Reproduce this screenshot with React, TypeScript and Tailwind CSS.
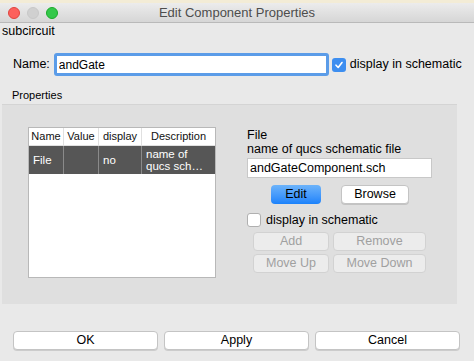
import React, { useState } from 'react';

const font = { fontFamily: '"Liberation Sans", Arial, sans-serif' };

function MacButton({ label, className = '' }: { label: string; className?: string }) {
  return (
    <button
      className={`flex items-center justify-center rounded-[4px] border border-[#c4c4c4] bg-white text-[12.5px] text-black shadow-[0_1px_0_rgba(0,0,0,0.12)] ${className}`}
    >
      {label}
    </button>
  );
}

function DisabledButton({ label }: { label: string }) {
  return (
    <button className="flex h-[19px] items-center justify-center rounded-[4px] border border-[#d2d2d2] bg-[#ececec] text-[12.5px] text-[#a0a0a0]">
      {label}
    </button>
  );
}

export default function App() {
  const [name, setName] = useState('andGate');
  const [file, setFile] = useState('andGateComponent.sch');
  const [showName, setShowName] = useState(true);
  const [showFile, setShowFile] = useState(false);

  return (
    <div className="flex h-[361px] w-[474px] flex-col overflow-hidden bg-[#e9e9e9] text-black" style={font}>
      {/* desktop strip above the window */}
      <div className="h-[3px] bg-[#f3ecd6]" />

      {/* Title bar */}
      <div className="relative flex h-[20px] items-center justify-center border-b border-[#b9b9b9] bg-gradient-to-b from-[#ececec] to-[#d6d6d6]">
        <div className="absolute left-[8px] top-[4px] flex gap-[7px]">
          <span className="h-[12px] w-[12px] rounded-full border border-[#e0443e] bg-[#fc605c]" />
          <span className="h-[12px] w-[12px] rounded-full border border-[#c8c8c8] bg-[#d0d0d0]" />
          <span className="h-[12px] w-[12px] rounded-full border border-[#1aab29] bg-[#34c84a]" />
        </div>
        <span className="text-[13px] text-[#4d4d4d]">Edit Component Properties</span>
      </div>

      {/* Body */}
      <div className="flex flex-1 flex-col text-[12px]">
        <div className="pl-[2px] pt-[1px] text-[12.5px] leading-[15px]">subcircuit</div>

        {/* Name row */}
        <div className="mt-[14px] flex items-center pl-[13px]">
          <span className="text-[12.5px]">Name:</span>
          <input
            value={name}
            onChange={(e) => setName(e.target.value)}
            className="ml-[4px] h-[23px] w-[275px] rounded-[3px] border-[3px] border-[#5b9ce8] bg-white px-[2px] text-[12px] outline-none"
          />
          <label className="ml-[3px] flex items-center gap-[4px] text-[12.5px]">
            <span
              onClick={() => setShowName(!showName)}
              className={`flex h-[14px] w-[14px] items-center justify-center rounded-[3px] ${showName ? 'bg-[#3d8ef0]' : 'border border-[#b0b0b0] bg-white'}`}
            >
              {showName && (
                <svg width="10" height="10" viewBox="0 0 10 10">
                  <path d="M2 5.2 L4.2 7.5 L8 2.5" fill="none" stroke="white" strokeWidth="1.6" strokeLinecap="round" strokeLinejoin="round" />
                </svg>
              )}
            </span>
            display in schematic
          </label>
        </div>

        {/* Properties group */}
        <div className="mt-[13px] pl-[12px] text-[11px] leading-[13px]">Properties</div>
        <div className="ml-[2px] mt-[2px] flex h-[200px] w-[455px] border-t border-[#d4d4d4] bg-[#dfdfdf] pt-[22px]">
          {/* Table */}
          <div className="ml-[26px] flex h-[151px] w-[188px] flex-col border border-[#b8b8b8] bg-white text-[11px]">
            <div className="flex h-[18px] items-center border-b border-[#e0e0e0] text-[#111]">
              <div className="w-[35px] border-r border-[#e0e0e0] text-center">Name</div>
              <div className="w-[35px] border-r border-[#e0e0e0] text-center">Value</div>
              <div className="w-[43px] border-r border-[#e0e0e0] text-center">display</div>
              <div className="flex-1 text-center">Description</div>
            </div>
            <div className="flex h-[28px] bg-[#565656] text-[11.5px] leading-[12px] text-white">
              <div className="flex w-[35px] items-center border-r border-[#8a8a8a] pl-[4px]">File</div>
              <div className="w-[35px] border-r border-[#8a8a8a]" />
              <div className="flex w-[43px] items-center border-r border-[#8a8a8a] pl-[4px]">no</div>
              <div className="flex flex-1 flex-col justify-center pl-[4px]">
                <span>name of</span>
                <span>qucs sch…</span>
              </div>
            </div>
          </div>

          {/* Right side */}
          <div className="ml-[31px] flex w-[186px] flex-col pt-[1px] text-[12.5px]">
            <div className="leading-[14px]">File</div>
            <div className="leading-[15px]">name of qucs schematic file</div>
            <input
              value={file}
              onChange={(e) => setFile(e.target.value)}
              className="mt-[1px] h-[20px] w-[185px] border border-[#c8c8c8] bg-white px-[2px] text-[12.5px] outline-none"
            />
            <div className="mt-[7px] flex items-start">
              <button className="ml-[24px] flex h-[19px] w-[50px] items-center justify-center rounded-[4px] bg-gradient-to-b from-[#6cb3fa] to-[#1a82fb] text-[12.5px] text-black">
                Edit
              </button>
              <MacButton label="Browse" className="ml-[20px] h-[19px] w-[68px]" />
            </div>
            <label className="mt-[9px] flex h-[14px] items-center gap-[5px]">
              <span
                onClick={() => setShowFile(!showFile)}
                className="h-[14px] w-[14px] rounded-[3px] border border-[#b0b0b0] bg-white"
              >
                {showFile && (
                  <svg width="12" height="12" viewBox="0 0 10 10">
                    <path d="M2 5.2 L4.2 7.5 L8 2.5" fill="none" stroke="#3d8ef0" strokeWidth="1.6" />
                  </svg>
                )}
              </span>
              display in schematic
            </label>
            <div className="ml-[6px] mt-[5px] grid grid-cols-[76px_93px] gap-x-[4px] gap-y-[3px]">
              <DisabledButton label="Add" />
              <DisabledButton label="Remove" />
              <DisabledButton label="Move Up" />
              <DisabledButton label="Move Down" />
            </div>
          </div>
        </div>

        {/* Dialog buttons */}
        <div className="mt-[27px] flex gap-[6px] pl-[13px]">
          <MacButton label="OK" className="h-[19px] w-[145px]" />
          <MacButton label="Apply" className="h-[19px] w-[145px]" />
          <MacButton label="Cancel" className="h-[19px] w-[145px]" />
        </div>
      </div>
    </div>
  );
}
